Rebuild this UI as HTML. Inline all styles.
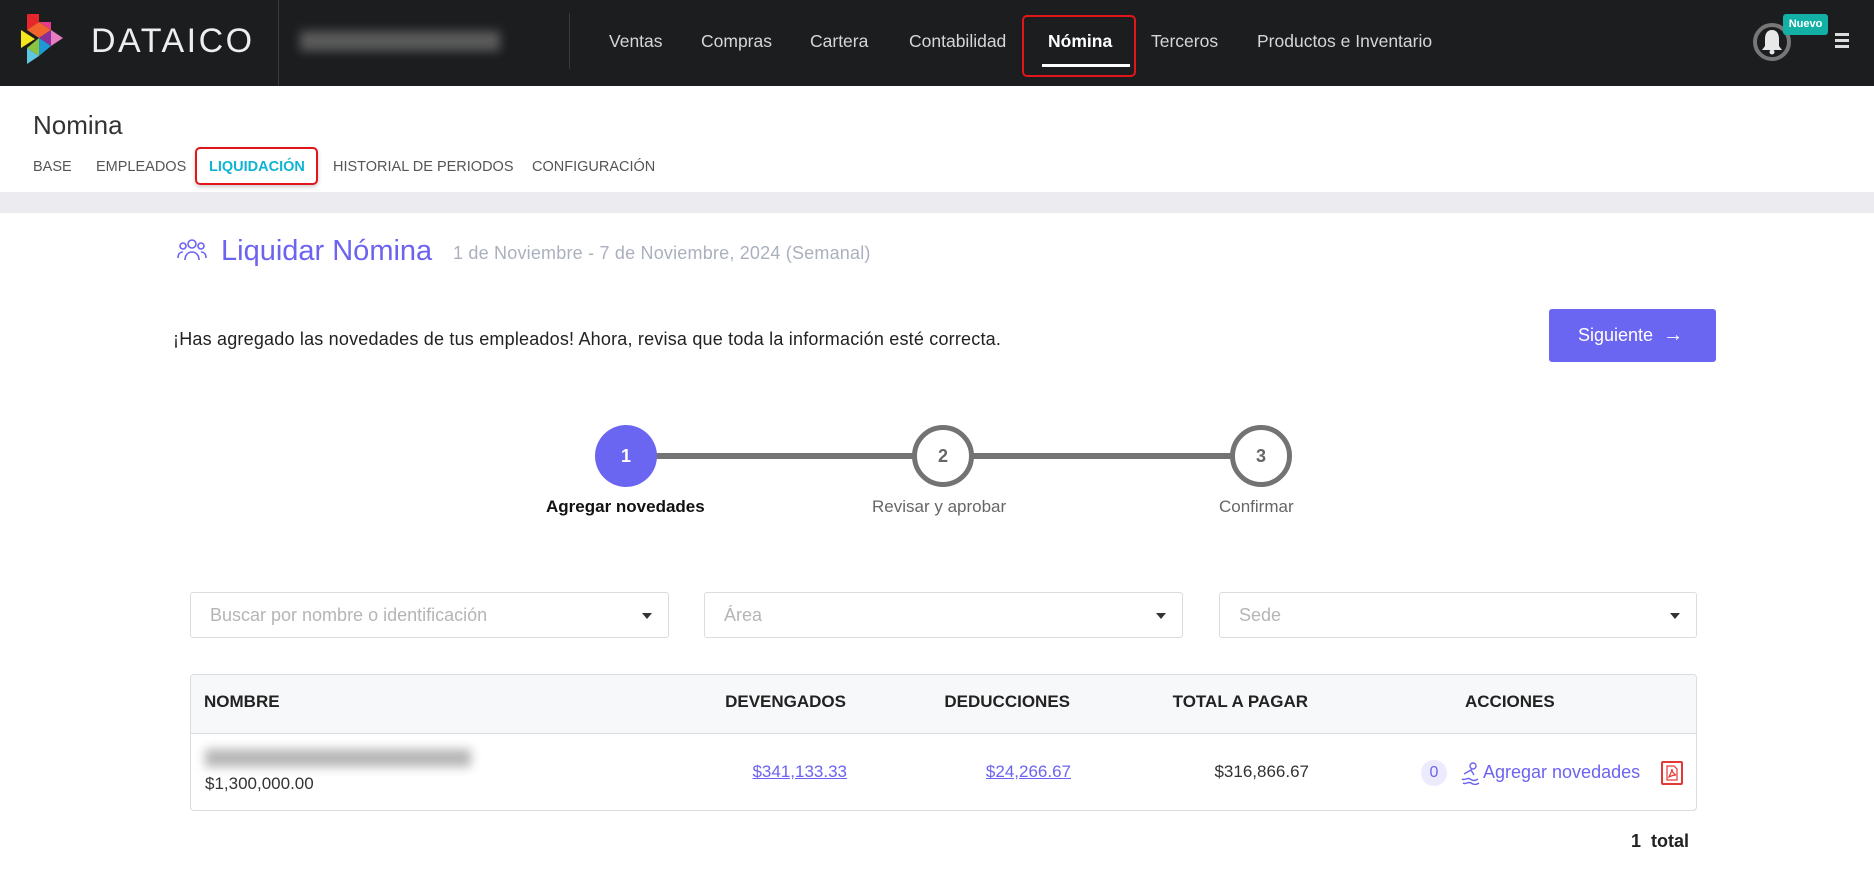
<!DOCTYPE html>
<html><head><meta charset="utf-8"><style>
*{box-sizing:border-box;margin:0;padding:0}
body{width:1874px;height:873px;overflow:hidden;background:#fff;font-family:"Liberation Sans",sans-serif;position:relative;color:#333}
.a{position:absolute;white-space:nowrap}
.nav{position:absolute;left:0;top:0;width:1874px;height:86px;background:#1c1d1f}
.ni{position:absolute;top:31px;font-size:17.5px;color:#d6d6d6}
.tab{position:absolute;top:159px;font-size:14.5px;color:#555}
.sel{position:absolute;top:592px;height:46px;border:1px solid #dcdcdc;border-radius:3px;font-size:18px;color:#b5b5b5;padding:12px 19px}
.sel:after{content:"";position:absolute;right:16px;top:20px;border-left:5px solid transparent;border-right:5px solid transparent;border-top:6px solid #333}
.th{position:absolute;top:692px;font-size:17px;font-weight:bold;color:#222}
.step{position:absolute;width:62px;height:62px;border-radius:50%;top:425px;font-size:18px;font-weight:bold;text-align:center;line-height:52px}
</style></head><body>
<div class="nav">
 <svg class="a" style="left:21px;top:14px" width="52" height="50" viewBox="0 0 52 50">
  <polygon points="6,0 18,8 6,16" fill="#e8262b"/><polygon points="6,0 18,8 18,0" fill="#e8262b"/>
  <polygon points="18,8 30,16 18,24 6,16" fill="#f2632e"/><polygon points="18,8 30,16 30,8" fill="#e43a8c"/>
  <polygon points="30,16 42,24 30,32" fill="#e87cc0"/><polygon points="18,24 30,16 30,32" fill="#8b2f99"/>
  <polygon points="0,16 14,25 0,34" fill="#f5e61d"/><polygon points="6,34 18,24 18,42" fill="#8cc43f"/>
  <polygon points="18,24 30,32 18,42" fill="#1d9ad6"/><polygon points="6,34 18,42 6,50" fill="#5ec6e0"/>
 </svg>
 <div class="a" style="left:91px;top:22px;font-size:34px;color:#eee;letter-spacing:2.5px;font-weight:300">DATAICO</div>
 <div class="a" style="left:278px;top:0;width:1px;height:86px;background:#3a3a3a"></div>
 <div class="a" style="left:300px;top:31px;width:200px;height:20px;background:#6a6a6a;filter:blur(5px);opacity:.8"></div>
 <div class="a" style="left:569px;top:13px;width:1px;height:56px;background:#3a3a3a"></div>
 <div class="ni" style="left:609px">Ventas</div>
 <div class="ni" style="left:701px">Compras</div>
 <div class="ni" style="left:810px">Cartera</div>
 <div class="ni" style="left:909px">Contabilidad</div>
 <div class="ni" style="left:1048px;color:#fff;font-weight:bold">Nómina</div>
 <div class="a" style="left:1042px;top:64px;width:88px;height:3px;background:#fff"></div>
 <div class="a" style="left:1022px;top:15px;width:114px;height:62px;border:2px solid #e0161b;border-radius:5px"></div>
 <div class="ni" style="left:1151px">Terceros</div>
 <div class="ni" style="left:1257px">Productos e Inventario</div>
 <div class="a" style="left:1753px;top:23px;width:38px;height:38px;border-radius:50%;border:4px solid #777;background:#1c1d1f"></div>
 <svg class="a" style="left:1760px;top:28px" width="24" height="28" viewBox="0 0 24 28"><path d="M12 2c-5 0-7 4-7 9v7l-3 4h20l-3-4v-7c0-5-2-9-7-9z" fill="#e8e8e8"/><circle cx="12" cy="24" r="2.5" fill="#e8e8e8"/></svg>
 <div class="a" style="left:1783px;top:14px;width:45px;height:21px;background:#13b0a5;border-radius:3px;color:#fff;font-size:11px;font-weight:bold;text-align:center;line-height:21px">Nuevo</div>
 <div class="a" style="left:1835px;top:33px;width:14px;height:3px;background:#ddd;box-shadow:0 6px 0 #ddd,0 12px 0 #ddd"></div>
</div>
<div class="a" style="left:33px;top:110px;font-size:26px;color:#333;font-weight:300">Nomina</div>
<div class="tab" style="left:33px">BASE</div>
<div class="tab" style="left:96px">EMPLEADOS</div>
<div class="tab" style="left:209px;color:#0fb4d4;font-weight:bold">LIQUIDACIÓN</div>
<div class="a" style="left:195px;top:147px;width:123px;height:38px;border:2px solid #e0161b;border-radius:5px;box-shadow:0 2px 4px rgba(0,0,0,.2)"></div>
<div class="tab" style="left:333px">HISTORIAL DE PERIODOS</div>
<div class="tab" style="left:532px">CONFIGURACIÓN</div>
<div class="a" style="left:0;top:192px;width:1874px;height:21px;background:#ebebf0"></div>

<svg class="a" style="left:176px;top:238px" width="32" height="26" viewBox="0 0 32 26" fill="none" stroke="#6c63f0" stroke-width="1.6"><circle cx="16" cy="6" r="4"/><circle cx="7" cy="8" r="3"/><circle cx="25" cy="8" r="3"/><path d="M9 22c0-5 3-8 7-8s7 3 7 8M2 20c0-4 2-6 5-6M30 20c0-4-2-6-5-6"/></svg>
<div class="a" style="left:221px;top:235px;font-size:29px;color:#6c63f0">Liquidar Nómina</div>
<div class="a" style="left:453px;top:243px;font-size:18px;color:#aab0bd;letter-spacing:0.2px">1 de Noviembre - 7 de Noviembre, 2024 (Semanal)</div>
<div class="a" style="left:173px;top:329px;font-size:18px;color:#222;letter-spacing:0.2px">¡Has agregado las novedades de tus empleados! Ahora, revisa que toda la información esté correcta.</div>
<div class="a" style="left:1549px;top:309px;width:167px;height:53px;background:#6b66f2;border-radius:3px;color:#fff;font-size:18px;line-height:53px;padding-left:29px">Siguiente &nbsp;<span style="font-size:20px">→</span></div>

<div class="a" style="left:650px;top:453px;width:600px;height:6px;background:#737373"></div>
<div class="step" style="left:595px;background:#6b66f2;color:#fff;line-height:62px">1</div>
<div class="step" style="left:912px;border:5px solid #737373;background:#fff;color:#666">2</div>
<div class="step" style="left:1230px;border:5px solid #737373;background:#fff;color:#666">3</div>
<div class="a" style="left:546px;top:497px;font-size:17px;font-weight:bold;color:#111">Agregar novedades</div>
<div class="a" style="left:872px;top:497px;font-size:17px;color:#666">Revisar y aprobar</div>
<div class="a" style="left:1219px;top:497px;font-size:17px;color:#666">Confirmar</div>

<div class="sel" style="left:190px;width:479px">Buscar por nombre o identificación</div>
<div class="sel" style="left:704px;width:479px">Área</div>
<div class="sel" style="left:1219px;width:478px">Sede</div>

<div class="a" style="left:190px;top:674px;width:1507px;height:137px;border:1px solid #dcdcdc;border-radius:4px;overflow:hidden">
 <div style="height:59px;background:#f7f8fa;border-bottom:1px solid #dcdcdc"></div>
</div>
<div class="th" style="left:204px">NOMBRE</div>
<div class="th" style="left:846px;transform:translateX(-100%)">DEVENGADOS</div>
<div class="th" style="left:1070px;transform:translateX(-100%)">DEDUCCIONES</div>
<div class="th" style="left:1308px;transform:translateX(-100%)">TOTAL A PAGAR</div>
<div class="th" style="left:1465px">ACCIONES</div>
<div class="a" style="left:205px;top:749px;width:266px;height:18px;background:#999;filter:blur(5px);opacity:.7"></div>
<div class="a" style="left:205px;top:774px;font-size:17px;color:#333">$1,300,000.00</div>
<div class="a" style="left:847px;top:762px;font-size:17px;color:#6c63f0;text-decoration:underline;transform:translateX(-100%)">$341,133.33</div>
<div class="a" style="left:1071px;top:762px;font-size:17px;color:#6c63f0;text-decoration:underline;transform:translateX(-100%)">$24,266.67</div>
<div class="a" style="left:1309px;top:762px;font-size:17px;color:#333;transform:translateX(-100%)">$316,866.67</div>
<div class="a" style="left:1421px;top:760px;width:26px;height:26px;border-radius:13px;background:#eceafd;color:#6c63f0;font-size:16px;text-align:center;line-height:26px">0</div>
<svg class="a" style="left:1460px;top:761px" width="22" height="24" viewBox="0 0 22 24" fill="none" stroke="#6c63f0" stroke-width="1.4"><circle cx="13" cy="5" r="3"/><path d="M4 13l7-4 3 5M2 18c3 2 5-2 8 0s5 2 8 0M3 22c3 2 5-2 8 0s5 2 8 0"/></svg>
<div class="a" style="left:1483px;top:762px;font-size:18px;color:#6c63f0">Agregar novedades</div>
<div class="a" style="left:1661px;top:761px;width:22px;height:24px;border:2px solid #e53935;border-radius:2px"></div>
<svg class="a" style="left:1665px;top:765px" width="14" height="16" viewBox="0 0 14 16" fill="none" stroke="#e53935" stroke-width="1.2"><path d="M2 1h7l3 3v11H2z"/><path d="M4 12c2-4 3-6 3-8 0 3 2 5 4 6-3 0-5 1-7 2z"/></svg>
<div class="a" style="left:1689px;top:831px;font-size:18px;font-weight:bold;color:#222;transform:translateX(-100%)">1&nbsp; total</div>
</body></html>
